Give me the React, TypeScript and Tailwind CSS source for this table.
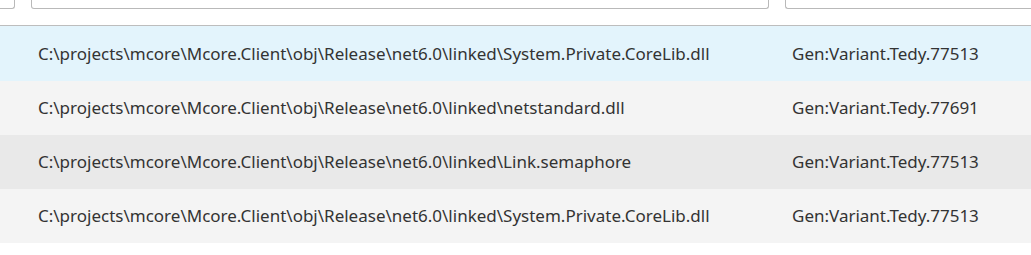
import React from "react";

const rows = [
  { path: "C:\\projects\\mcore\\Mcore.Client\\obj\\Release\\net6.0\\linked\\System.Private.CoreLib.dll", v: "Gen:Variant.Tedy.77513", bg: "bg-[#e3f4fc]", h: "h-[55px]" },
  { path: "C:\\projects\\mcore\\Mcore.Client\\obj\\Release\\net6.0\\linked\\netstandard.dll", v: "Gen:Variant.Tedy.77691", bg: "bg-[#f4f4f4]", h: "h-[54px]" },
  { path: "C:\\projects\\mcore\\Mcore.Client\\obj\\Release\\net6.0\\linked\\Link.semaphore", v: "Gen:Variant.Tedy.77513", bg: "bg-[#e9e9e9]", h: "h-[54px]" },
  { path: "C:\\projects\\mcore\\Mcore.Client\\obj\\Release\\net6.0\\linked\\System.Private.CoreLib.dll", v: "Gen:Variant.Tedy.77513", bg: "bg-[#f4f4f4]", h: "h-[54px]" },
];

export default function App() {
  return (
    <div className="w-[1031px] h-[255px] bg-white overflow-hidden text-[#333333]" style={{ fontFamily: '"Noto Sans", sans-serif' }}>
      <div className="flex h-[25px] items-start">
        <div className="w-[15px] h-[9px] border-b border-r border-[#b9b9b9] rounded-br-[3px]" />
        <div className="ml-[16px] w-[738px] h-[9px] border-b border-l border-r border-[#b9b9b9] rounded-b-[3px]" />
        <div className="ml-[16px] flex-1 h-[9px] border-b border-l border-[#b9b9b9] rounded-bl-[3px]" />
      </div>
      <div className="border-t border-[#bdbdbd]">
        {rows.map((r, i) => (
          <div key={i} className={`flex items-center ${r.bg} ${r.h} text-[17px]`}>
            <div className="pl-[38px] w-[792px] whitespace-nowrap">{r.path}</div>
            <div className="whitespace-nowrap">{r.v}</div>
          </div>
        ))}
      </div>
    </div>
  );
}
